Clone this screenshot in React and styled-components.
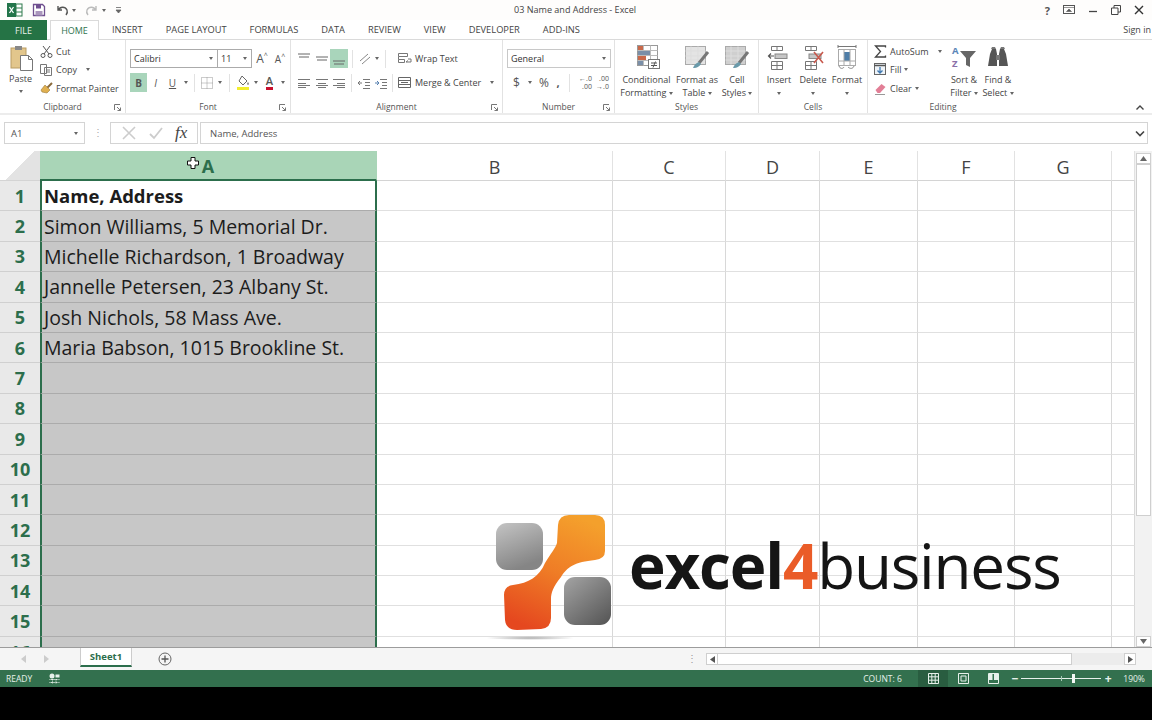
import React from 'react';
import styled, { createGlobalStyle } from 'styled-components';

const GlobalStyle = createGlobalStyle`
    html, body { margin: 0; padding: 0; background: #000; }
    body { font-family: "Open Sans", "Liberation Sans", sans-serif; }
`;

const TABS = ['INSERT', 'PAGE LAYOUT', 'FORMULAS', 'DATA', 'REVIEW', 'VIEW', 'DEVELOPER', 'ADD-INS'];
const COLUMNS = ['B', 'C', 'D', 'E', 'F', 'G'];
const GRID = '40px 337px 236px 113px 94px 98px 97px 97px 23px';
const CELLS = [
    'Name, Address',
    'Simon Williams, 5 Memorial Dr.',
    'Michelle Richardson, 1 Broadway',
    'Jannelle Petersen, 23 Albany St.',
    'Josh Nichols, 58 Mass Ave.',
    'Maria Babson, 1015 Brookline St.',
    '', '', '', '', '', '', '', '', '', '',
];

const Icon = ({ w = 14, h = 14, children }) => (
    <svg width={w} height={h} viewBox={`0 0 ${w} ${h}`} fill="none" style={{ display: 'block' }}>{children}</svg>
);

const AlignV = ({ y }) => (
    <Icon w={14} h={14}>
        <path d={`M1 ${y}h12M2 ${y + 3}h10`} stroke="#666" />
    </Icon>
);
const AlignH = ({ kind }) => {
    const short = { left: 'M1 7.5h8M1 11.5h8', center: 'M3 7.5h8M3 11.5h8', right: 'M5 7.5h8M5 11.5h8' }[kind];
    return (
        <Icon>
            <path d={`M1 3.5h12M1 9.5h12${short}`} stroke="#777" />
        </Icon>
    );
};

const CondFormat = () => (
    <Icon w={26} h={28}>
        <rect x="3.5" y="1.5" width="20" height="20" fill="#fff" stroke="#999" />
        <path d="M3.5 6.5h20M3.5 11.5h20M3.5 16.5h20M9.5 1.5v20M16.5 1.5v20" stroke="#bbb" />
        <rect x="4" y="2" width="5" height="4" fill="#c9694a" />
        <rect x="4" y="7" width="12" height="4" fill="#7a8fa8" />
        <rect x="4" y="12" width="8" height="4" fill="#c9694a" />
        <rect x="4" y="17" width="5" height="4" fill="#7a8fa8" />
        <rect x="14.5" y="15.5" width="11" height="9" fill="#fff" stroke="#777" />
        <path d="M17 19h6M17 21.5h6M21.5 17.5l-2.5 6" stroke="#555" />
    </Icon>
);
const TableBrush = ({ fill }) => (
    <Icon w={26} h={28}>
        <rect x="1.5" y="2.5" width="20" height="18" fill={fill} stroke="#aaa" />
        <path d="M1.5 7h20M1.5 12h20M1.5 16h20M7 2.5v18M14 2.5v18" stroke="#ddd" />
        <path d="M24 8L15 19" stroke="#777" strokeWidth="3" />
        <path d="M15 18c-3 1-5 3-6 6 3 .5 6-1 8-4z" fill="#6a9aaa" />
    </Icon>
);
const InsertCells = ({ del }) => (
    <Icon w={26} h={28}>
        <path d="M5.5 2.500h11v4h-11zM5.500 17.500h11v8h-11zM5.500 21.500h11M11 17.500v8M11 2.500v4" stroke="#777" />
        <rect x="9" y="10" width="12" height="4.500" fill="#c6c6c6" stroke="#888" />
        {del
            ? <path d="M14 8l9 11M23 8l-9 11" stroke="#c8584c" strokeWidth="1.600" />
            : <path d="M8 12H2.500M5 9.500L2.500 12 5 14.500" stroke="#555" strokeWidth="1.200" />}
    </Icon>
);
const FormatCells = () => (
    <Icon w={26} h={28}>
        <path d="M4 2.500h18M4 1v3M22 1v3" stroke="#777" />
        <rect x="4.500" y="5.500" width="17" height="16" fill="#fff" stroke="#aaa" />
        <rect x="10" y="8" width="6" height="9" fill="#4f7ea8" />
        <path d="M10 5.500v16M16 5.500v16M4.500 17h17" stroke="#aaa" />
        <path d="M5 22c1 3 4 3 5 1M14 23c2 2 5 2 6-1" stroke="#888" />
    </Icon>
);
const Binoculars = () => (
    <Icon w={26} h={28}>
        <path d="M3 22l2-12 2-5h4l1 5v12zM14 22V10l1-5h4l2 5 2 12z" fill="#555" />
        <rect x="11" y="11" width="4" height="5" fill="#777" />
        <path d="M6 5l1-2h3l1 2M15 5l1-2h3l1 2" fill="#777" />
    </Icon>
);
const SortFilter = () => (
    <Icon w={26} h={28}>
        <text x="1" y="10" fontFamily="Open Sans" fontSize="9.500" fontWeight="700" fill="#5b86b8">A</text>
        <text x="1" y="23" fontFamily="Open Sans" fontSize="9.500" fontWeight="700" fill="#8a6fa8">Z</text>
        <path d="M9 7h16l-6 7v9l-4-2v-7z" fill="#666" />
    </Icon>
);
const PasteIcon = () => (
    <Icon w={26} h={26}>
        <rect x="3" y="3" width="15" height="20" fill="#e2c68c" stroke="#b99c63" />
        <rect x="7" y="1" width="7" height="4" fill="#888" />
        <path d="M12.500 10.500h8l4 4v11h-12z" fill="#fff" stroke="#777" />
        <path d="M20.500 10.500v4h4" stroke="#777" />
    </Icon>
);

const Caret = () => <CaretShape />;

const MiniLauncher = () => (
    <Launcher>
        <Icon w={7} h={7}>
            <path d="M.5 6V.5H6M3 3l3.500 3.500M6.500 3.500v3h-3" stroke="#777" />
        </Icon>
    </Launcher>
);

const LogoMark = () => (
    <svg width="126" height="128" viewBox="0 0 126 128" style={{ display: 'block' }}>
        <defs>
            <linearGradient id="greyA" x1="0" y1="0" x2="0.4" y2="1">
                <stop offset="0" stopColor="#c4c4c4" />
                <stop offset="1" stopColor="#858585" />
            </linearGradient>
            <linearGradient id="greyB" x1="0" y1="0" x2="0.8" y2="1">
                <stop offset="0" stopColor="#a4a4a4" />
                <stop offset="1" stopColor="#5a5a5a" />
            </linearGradient>
            <linearGradient id="orange" x1="0.7" y1="0" x2="0.3" y2="1">
                <stop offset="0" stopColor="#f4a02c" />
                <stop offset="0.5" stopColor="#ef7c26" />
                <stop offset="1" stopColor="#e5481f" />
            </linearGradient>
            <radialGradient id="shadow">
                <stop offset="0" stopColor="#aaa" />
                <stop offset="1" stopColor="#aaa" stopOpacity="0" />
            </radialGradient>
        </defs>
        <g transform="translate(6 0)">
            <rect x="5" y="8" width="47" height="47" rx="11" fill="url(#greyA)" />
            <rect x="73" y="62" width="47" height="48" rx="11" fill="url(#greyB)" />
            <path d="M78 0H104Q114 0 114 10V36Q114 44 104 45C84 47 76 52 70 62C62 72 60 78 60 84V103Q60 113 50 114L26 115Q15 115 14 105L13 80Q13 71 22 70C38 68 48 62 54 48C60 38 64 34 66 28L67 10Q68 0 78 0Z" fill="url(#orange)" />
            <ellipse cx="39" cy="123" rx="45" ry="2" fill="url(#shadow)" />
        </g>
    </svg>
);

const App = () => {
    return (
        <Window>
            <GlobalStyle />
            <TitleBar>
                <QuickAccess>
                    <Icon w={16} h={16}>
                        <rect x="6" y="2" width="9" height="12" fill="#fff" stroke="#2f7a4d" />
                        <path d="M9 2v12M6 6h9M6 10h9" stroke="#2f7a4d" />
                        <rect x="0" y="1" width="9" height="14" fill="#23744a" />
                        <path d="M2.500 5l4 6M6.500 5l-4 6" stroke="#fff" strokeWidth="1.300" />
                    </Icon>
                    <Icon w={14} h={14}>
                        <path d="M1.500 1.500h9l2 2v9h-11z" stroke="#6f4f8f" fill="#fff" strokeWidth="1.300" />
                        <rect x="4" y="2" width="5" height="3.500" fill="#6f4f8f" />
                        <rect x="3.500" y="8" width="7" height="4.500" fill="#aa96bd" />
                    </Icon>
                    <QuickUndo>
                        <Icon w={14} h={14}>
                            <path d="M3 3v4h4M3.500 7C5 3.500 10 3 12 7c.8 2 .2 3.500-1 5" stroke="#555" strokeWidth="1.400" />
                        </Icon>
                        <Caret />
                    </QuickUndo>
                    <QuickUndo>
                        <Icon w={14} h={14}>
                            <path d="M11 3v4H7M10.500 7C9 3.500 4 3 2 7c-.8 2-.2 3.500 1 5" stroke="#bbb" strokeWidth="1.400" />
                        </Icon>
                        <Caret />
                    </QuickUndo>
                    <Icon w={7} h={8}>
                        <path d="M1 1.500h5M1 4h5l-2.500 3z" stroke="#666" fill="#666" strokeWidth=".8" />
                    </Icon>
                </QuickAccess>
                <WindowTitle>03 Name and Address - Excel</WindowTitle>
                <WindowControls>
                    <HelpMark>?</HelpMark>
                    <Icon w={12} h={10}>
                        <rect x=".5" y=".5" width="11" height="8" stroke="#555" />
                        <path d="M.5 2.500h11M6 4l-2.500 2.500h5z" stroke="#555" fill="#555" strokeWidth=".6" />
                    </Icon>
                    <Icon w={10} h={10}><path d="M1 6.500h8" stroke="#444" strokeWidth="1.300" /></Icon>
                    <Icon w={10} h={10}>
                        <path d="M.5 3h6.500v6.500H.5zM3 3V.5h6.500V7H7" stroke="#444" />
                    </Icon>
                    <Icon w={10} h={10}><path d="M1 1l8 8M9 1l-8 8" stroke="#333" strokeWidth="1.400" /></Icon>
                </WindowControls>
            </TitleBar>

            <TabStrip>
                <FileTab>FILE</FileTab>
                <HomeTab>HOME</HomeTab>
                {TABS.map((tab) => <RibbonTab key={tab}>{tab}</RibbonTab>)}
                <SignIn>Sign in</SignIn>
            </TabStrip>

            <Ribbon>
                <Group $w={126}>
                    <ClipboardBody>
                        <PasteButton>
                            <PasteIcon />
                            <span>Paste</span>
                            <Caret />
                        </PasteButton>
                        <Stack>
                            <StackItem>
                                <Icon w={13} h={13}>
                                    <path d="M3 1l6 8M10 1L4 9" stroke="#555" />
                                    <circle cx="3" cy="10.500" r="2" stroke="#555" />
                                    <circle cx="10" cy="10.500" r="2" stroke="#555" />
                                </Icon>
                                Cut
                            </StackItem>
                            <StackItem>
                                <Icon w={13} h={13}>
                                    <path d="M.5 1.500h6v9h-6zM4.500 4.500h7v8h-7zM6 7h4M6 9h4" stroke="#777" fill="#fff" />
                                </Icon>
                                Copy
                                <CaretGap><Caret /></CaretGap>
                            </StackItem>
                            <StackItem>
                                <Icon w={13} h={13}>
                                    <path d="M7 6l5-5" stroke="#8a6a3a" strokeWidth="2" />
                                    <path d="M5 3l5 5-3 3-5-1-1-2z" fill="#e0b050" stroke="#9a7a3a" strokeWidth=".6" />
                                </Icon>
                                Format Painter
                            </StackItem>
                        </Stack>
                    </ClipboardBody>
                    <GroupLabel>Clipboard<MiniLauncher /></GroupLabel>
                </Group>

                <Group $w={165}>
                    <SmallRows>
                        <ToolRow>
                            <Select $w={88}>Calibri<Caret /></Select>
                            <Select $w={34} $joined>11<Caret /></Select>
                            <ToolButton $w={18} $ml={1}><BigA $size={12}>A<sup>^</sup></BigA></ToolButton>
                            <ToolButton $w={18}><BigA $size={10}>A<sup>^</sup></BigA></ToolButton>
                        </ToolRow>
                        <ToolRow>
                            <ToolButton $w={17} $on><Glyph $b>B</Glyph></ToolButton>
                            <ToolButton $w={17}><Glyph $i>I</Glyph></ToolButton>
                            <ToolButton $w={17}><Glyph $u>U</Glyph></ToolButton>
                            <ToolButton $w={10}><Caret /></ToolButton>
                            <Divider $gap={3} />
                            <ToolButton $w={17}>
                                <Icon w={12} h={12}>
                                    <path d="M.5.500h11v11H.5zM6 .5v11M.5 6h11" stroke="#999" strokeDasharray="1 1" />
                                </Icon>
                            </ToolButton>
                            <ToolButton $w={10}><Caret /></ToolButton>
                            <Divider />
                            <ToolButton $w={17}>
                                <Icon w={14} h={16}>
                                    <path d="M6 1l5 5-4 4-4-4z" stroke="#666" fill="#fff" />
                                    <path d="M12 7c1 1.500 1 2.500 0 3-1-.5-1-1.500 0-3z" fill="#666" />
                                    <rect x="1" y="12" width="12" height="3" fill="#f2ee2e" />
                                </Icon>
                            </ToolButton>
                            <ToolButton $w={10}><Caret /></ToolButton>
                            <ToolButton $w={17}>
                                <ColorA>A</ColorA>
                            </ToolButton>
                            <ToolButton $w={10}><Caret /></ToolButton>
                        </ToolRow>
                    </SmallRows>
                    <GroupLabel>Font<MiniLauncher /></GroupLabel>
                </Group>

                <Group $w={212}>
                    <SmallRows>
                        <ToolRow>
                            <ToolButton $w={18}><AlignV y={2} /></ToolButton>
                            <ToolButton $w={17}><AlignV y={5} /></ToolButton>
                            <ToolButton $w={18} $on><AlignV y={9} /></ToolButton>
                            <Divider />
                            <ToolButton $w={15}>
                                <Icon w={14} h={14}>
                                    <path d="M2 9l8-7M4 12l8-7" stroke="#888" />
                                </Icon>
                            </ToolButton>
                            <ToolButton $w={9}><Caret /></ToolButton>
                            <Divider />
                            <WideAction $ml={7}>
                                <Icon w={14} h={14}>
                                    <path d="M.5 1.500h9v3h-9zM.5 4.500v3h6M.5 7.500v3h6v-3M10 7h3v3H8l2-1.500" stroke="#777" />
                                </Icon>
                                Wrap Text
                            </WideAction>
                        </ToolRow>
                        <ToolRow>
                            <ToolButton $w={18}><AlignH kind="left" /></ToolButton>
                            <ToolButton $w={17}><AlignH kind="center" /></ToolButton>
                            <ToolButton $w={18}><AlignH kind="right" /></ToolButton>
                            <Divider $gap={3} />
                            <ToolButton $w={17}>
                                <Icon>
                                    <path d="M6 3.500h7M8 6.500h5M8 9.500h5M6 12.500h7M5 7H1M3 5L1 7l2 2" stroke="#777" />
                                </Icon>
                            </ToolButton>
                            <ToolButton $w={17}>
                                <Icon>
                                    <path d="M6 3.500h7M8 6.500h5M8 9.500h5M6 12.500h7" stroke="#777" />
                                    <path d="M1 7h4M3 5l2 2-2 2" stroke="#5680b0" />
                                </Icon>
                            </ToolButton>
                            <Divider $gap={3} />
                            <WideAction $ml={1}>
                                <Icon w={14} h={14}>
                                    <path d="M.5 1.500h12v10H.5zM.5 4.500h12M.5 8.500h12" stroke="#666" />
                                    <path d="M3 6.500h7" stroke="#666" />
                                </Icon>
                                Merge &amp; Center
                                <CaretGap><Caret /></CaretGap>
                            </WideAction>
                        </ToolRow>
                    </SmallRows>
                    <GroupLabel>Alignment<MiniLauncher /></GroupLabel>
                </Group>

                <Group $w={112}>
                    <SmallRows>
                        <ToolRow>
                            <Select $w={104} $soft>General<Caret /></Select>
                        </ToolRow>
                        <ToolRow>
                            <ToolButton $w={19}><Glyph $size={12}>$</Glyph></ToolButton>
                            <ToolButton $w={8}><Caret /></ToolButton>
                            <ToolButton $w={20}><Glyph $size={12}>%</Glyph></ToolButton>
                            <ToolButton $w={8}><Glyph $b $size={11}>,</Glyph></ToolButton>
                            <Divider $gap={7} />
                            <ToolButton $w={17}><Decimal>←.0<br />.00</Decimal></ToolButton>
                            <ToolButton $w={17}><Decimal>.00<br />→.0</Decimal></ToolButton>
                        </ToolRow>
                    </SmallRows>
                    <GroupLabel>Number<MiniLauncher /></GroupLabel>
                </Group>

                <Group $w={144}>
                    <BigRow>
                        <BigButton $w={57}>
                            <BigIcon><CondFormat /></BigIcon>
                            <span>Conditional</span>
                            <span>Formatting <Caret /></span>
                        </BigButton>
                        <BigButton $w={44}>
                            <BigIcon><TableBrush fill="#e4e4e4" /></BigIcon>
                            <span>Format as</span>
                            <span>Table <Caret /></span>
                        </BigButton>
                        <BigButton $w={36}>
                            <BigIcon><TableBrush fill="#cfcfcf" /></BigIcon>
                            <span>Cell</span>
                            <span>Styles <Caret /></span>
                        </BigButton>
                    </BigRow>
                    <GroupLabel>Styles</GroupLabel>
                </Group>

                <Group $w={109}>
                    <BigRow>
                        <BigButton $w={34}>
                            <BigIcon><InsertCells /></BigIcon>
                            <span>Insert</span>
                            <span><Caret /></span>
                        </BigButton>
                        <BigButton $w={34}>
                            <BigIcon><InsertCells del /></BigIcon>
                            <span>Delete</span>
                            <span><Caret /></span>
                        </BigButton>
                        <BigButton $w={34}>
                            <BigIcon><FormatCells /></BigIcon>
                            <span>Format</span>
                            <span><Caret /></span>
                        </BigButton>
                    </BigRow>
                    <GroupLabel>Cells</GroupLabel>
                </Group>

                <Group $w={150} $last>
                    <EditingBody>
                        <EditingStack>
                            <StackItem>
                                <Icon w={13} h={13}>
                                    <path d="M11.500 2.500V1H1.500L6.500 6.500l-5 5.500h10v-1.500" stroke="#444" strokeWidth="1.300" />
                                </Icon>
                                AutoSum
                                <CaretGap><Caret /></CaretGap>
                            </StackItem>
                            <StackItem>
                                <Icon w={13} h={13}>
                                    <rect x=".5" y=".5" width="11" height="11" stroke="#666" fill="#eef3f8" />
                                    <path d="M.5 2.500h11" stroke="#555" strokeWidth="1.500" />
                                    <path d="M6 4v6M3.500 7.500L6 10l2.500-2.500" stroke="#3f78b0" strokeWidth="1.300" />
                                </Icon>
                                Fill <Caret />
                            </StackItem>
                            <StackItem>
                                <Icon w={13} h={13}>
                                    <path d="M1.500 8l6-6 4 3-5.500 6H3.500z" fill="#e27e96" />
                                    <path d="M1 12.500h10" stroke="#999" />
                                </Icon>
                                Clear <Caret />
                            </StackItem>
                        </EditingStack>
                        <BigButton $w={34}>
                            <BigIcon><SortFilter /></BigIcon>
                            <span>Sort &amp;</span>
                            <span>Filter <Caret /></span>
                        </BigButton>
                        <BigButton $w={34}>
                            <BigIcon><Binoculars /></BigIcon>
                            <span>Find &amp;</span>
                            <span>Select <Caret /></span>
                        </BigButton>
                    </EditingBody>
                    <GroupLabel>Editing</GroupLabel>
                </Group>
                <Collapse>
                    <Icon w={10} h={7}><path d="M1.500 5.500L5 2l3.500 3.500" stroke="#444" strokeWidth="1.400" /></Icon>
                </Collapse>
            </Ribbon>

            <FormulaBar>
                <NameBox>A1<Caret /></NameBox>
                <Grip>⋮</Grip>
                <FxBox>
                    <Icon w={16} h={14}><path d="M2 1l12 12M14 1L2 13" stroke="#ccc" strokeWidth="1.600" /></Icon>
                    <Icon w={16} h={14}><path d="M2 8l4 4 8-10" stroke="#ccc" strokeWidth="1.800" /></Icon>
                    <FxMark>fx</FxMark>
                </FxBox>
                <FormulaInput>
                    Name, Address
                    <Icon w={10} h={7}><path d="M1 1.500L5 5.500l4-4" stroke="#444" strokeWidth="1.600" /></Icon>
                </FormulaInput>
            </FormulaBar>

            <SheetArea>
                <Sheet>
                    <HeaderRow>
                        <Corner />
                        <HeaderCell $selected>
                            A
                            <MoveCursor>
                                <Icon w={12} h={12}>
                                    <path d="M4 .5h4v3.500h3.500v4H8v3.500H4V8H.5V4H4z" fill="#fff" stroke="#111" />
                                </Icon>
                            </MoveCursor>
                        </HeaderCell>
                        {COLUMNS.map((col) => <HeaderCell key={col}>{col}</HeaderCell>)}
                        <HeaderCell />
                    </HeaderRow>
                    {CELLS.map((text, i) => (
                        <SheetRow key={i}>
                            <RowNumber>{i + 1}</RowNumber>
                            <SelectedCell $active={i === 0}>{text}</SelectedCell>
                            <Cell /><Cell /><Cell /><Cell /><Cell /><Cell /><Cell />
                        </SheetRow>
                    ))}
                    <Logo>
                        <LogoMark />
                        <LogoText>excel<em>4</em><span>business</span></LogoText>
                    </Logo>
                </Sheet>
                <VScroll>
                    <ScrollButton>
                        <Icon w={7} h={5}><path d="M3.500 0L7 5H0z" fill="#666" /></Icon>
                    </ScrollButton>
                    <VThumb />
                    <VTrack />
                    <ScrollButton>
                        <Icon w={7} h={5}><path d="M3.500 5L7 0H0z" fill="#666" /></Icon>
                    </ScrollButton>
                </VScroll>
            </SheetArea>

            <SheetTabs>
                <TabNav>
                    <Icon w={5} h={8}><path d="M5 0L0 4l5 4z" fill="#ccc" /></Icon>
                    <Icon w={5} h={8}><path d="M0 0l5 4-5 4z" fill="#ccc" /></Icon>
                </TabNav>
                <SheetTab>Sheet1</SheetTab>
                <AddSheet>
                    <Icon w={14} h={14}>
                        <circle cx="7" cy="7" r="6" stroke="#666" />
                        <path d="M7 3.500v7M3.500 7h7" stroke="#555" strokeWidth="1.300" />
                    </Icon>
                </AddSheet>
                <TabGrip>⋮</TabGrip>
                <HScroll>
                    <HButton>
                        <Icon w={5} h={7}><path d="M5 0L0 3.500 5 7z" fill="#555" /></Icon>
                    </HButton>
                    <HThumb />
                    <HTrack />
                    <HButton>
                        <Icon w={5} h={7}><path d="M0 0l5 3.500L0 7z" fill="#555" /></Icon>
                    </HButton>
                </HScroll>
            </SheetTabs>

            <StatusBar>
                <StatusText>READY</StatusText>
                <MacroIcon>
                    <Icon w={11} h={11}>
                        <circle cx="3" cy="3" r="2.500" fill="#e6f0ea" />
                        <path d="M6.500 1.500h4v3h-4z" fill="#e6f0ea" />
                        <path d="M.5 6.500h10M.5 9.500h10M3.500 6v5M7 6v5" stroke="#e6f0ea" strokeDasharray="1 .6" />
                    </Icon>
                </MacroIcon>
                <Count>COUNT: 6</Count>
                <ViewButton $on>
                    <Icon w={11} h={11}><path d="M.5.500h10v10H.5zM3.800.5v10M7.200.5v10M.5 3.800h10M.5 7.200h10" stroke="#e6f0ea" /></Icon>
                </ViewButton>
                <ViewButton>
                    <Icon w={11} h={11}><path d="M.5.500h10v10H.5zM3 3h5v5H3z" stroke="#e6f0ea" /></Icon>
                </ViewButton>
                <ViewButton>
                    <Icon w={11} h={11}><path d="M.5.500h10v10H.5z" stroke="#e6f0ea" /><path d="M1 1h3.500v6H1zM6 1h4v6H6z" fill="#e6f0ea" /></Icon>
                </ViewButton>
                <ZoomMark $ml={3}>−</ZoomMark>
                <ZoomSlider>
                    <ZoomTick />
                    <ZoomThumb />
                </ZoomSlider>
                <ZoomMark $ml={3}>+</ZoomMark>
                <ZoomValue>190%</ZoomValue>
            </StatusBar>
        </Window>
    );
};

export default App;

const Window = styled.div`
    width: 1152px;
    height: 720px;
    overflow: hidden;
    background: #000;
    display: flex;
    flex-direction: column;
`;

const TitleBar = styled.div`
    position: relative;
    height: 20px;
    background: #fefdfc;
    display: flex;
    align-items: center;
    justify-content: space-between;
`;

const QuickAccess = styled.div`
    display: flex;
    align-items: center;
    gap: 9px;
    padding-left: 7px;
`;

const QuickUndo = styled.div`
    display: flex;
    align-items: center;
    gap: 3px;
`;

const WindowTitle = styled.div`
    position: absolute;
    left: 514px;
    top: 3px;
    font-size: 9.05px;
    line-height: 14px;
    color: #444;
`;

const WindowControls = styled.div`
    display: flex;
    align-items: center;
    gap: 13px;
    padding-right: 8px;
`;

const HelpMark = styled.span`
    font-size: 11px;
    font-weight: 700;
    color: #555;
`;

const TabStrip = styled.div`
    height: 20px;
    background: #fff;
    display: flex;
    align-items: stretch;
    box-sizing: border-box;
    border-bottom: 1px solid #dadada;
`;

const FileTab = styled.div`
    width: 47px;
    height: 20px;
    background: #257345;
    color: #e8f2ec;
    font-size: 9px;
    display: flex;
    align-items: center;
    justify-content: center;
`;

const HomeTab = styled.div`
    width: 49px;
    height: 20px;
    margin-left: 3px;
    margin-right: 13px;
    box-sizing: border-box;
    background: #fff;
    border: 1px solid #dadada;
    border-bottom: none;
    color: #2f7350;
    font-size: 9px;
    display: flex;
    align-items: center;
    justify-content: center;
`;

const RibbonTab = styled.div`
    margin-right: 23px;
    color: #444;
    font-size: 9.3px;
    display: flex;
    align-items: center;
    white-space: nowrap;
`;

const SignIn = styled.div`
    margin-left: auto;
    color: #444;
    font-size: 9px;
    display: flex;
    align-items: center;
    padding-right: 1px;
    white-space: nowrap;
`;

const Ribbon = styled.div`
    position: relative;
    height: 75px;
    box-sizing: border-box;
    background: #fff;
    border-bottom: 2px solid #ececec;
    display: flex;
    font-size: 9px;
    color: #444;
`;

const Group = styled.div`
    position: relative;
    width: ${(p) => p.$w}px;
    height: 73px;
    box-sizing: border-box;
    display: flex;
    flex-direction: column;
    flex-shrink: 0;
    border-right: ${(p) => (p.$last ? 'none' : '1px solid #e2e2e2')};
`;

const GroupLabel = styled.div`
    position: relative;
    height: 13px;
    margin-top: auto;
    text-align: center;
    line-height: 13px;
    font-size: 8.5px;
    color: #555;
`;

const Launcher = styled.span`
    position: absolute;
    right: 4px;
    top: 4px;
`;

const ClipboardBody = styled.div`
    display: flex;
    padding: 2px 0 0 7px;
`;

const PasteButton = styled.div`
    width: 27px;
    display: flex;
    flex-direction: column;
    align-items: center;
    padding-top: 3px;
    line-height: 13px;

    span { margin-top: 1px; margin-bottom: 4px; }
`;

const Stack = styled.div`
    display: flex;
    flex-direction: column;
    padding-left: 6px;
`;

const EditingStack = styled(Stack)`
    width: 79px;
    flex-shrink: 0;
    box-sizing: border-box;
`;

const StackItem = styled.div`
    height: 18.5px;
    display: flex;
    align-items: center;
    gap: 3px;
    white-space: nowrap;
`;

const CaretGap = styled.span`
    margin-left: 6px;
    display: inline-flex;
`;

const CaretShape = styled.span`
    display: inline-block;
    width: 0;
    height: 0;
    flex-shrink: 0;
    vertical-align: middle;
    border-left: 2.5px solid transparent;
    border-right: 2.5px solid transparent;
    border-top: 3px solid #666;
`;

const SmallRows = styled.div`
    display: flex;
    flex-direction: column;
    gap: 5px;
    padding: 9px 0 0 4px;
`;

const ToolRow = styled.div`
    display: flex;
    align-items: center;
    height: 19px;
`;

const Select = styled.div`
    width: ${(p) => p.$w}px;
    height: 19px;
    box-sizing: border-box;
    padding: 0 4px 0 3px;
    display: flex;
    align-items: center;
    justify-content: space-between;
    background: #fff;
    border: 1px solid ${(p) => (p.$soft ? '#c8c8c8' : '#ababab')};
    border-left-width: ${(p) => (p.$joined ? 0 : 1)}px;
    font-size: 9px;
    color: #333;
`;

const ToolButton = styled.div`
    width: ${(p) => p.$w}px;
    height: 19px;
    margin-left: ${(p) => p.$ml || 0}px;
    flex-shrink: 0;
    display: flex;
    align-items: center;
    justify-content: center;
    background: ${(p) => (p.$on ? '#a9d5bb' : 'transparent')};
`;

const Divider = styled.div`
    width: 1px;
    height: 18px;
    margin: 0 ${(p) => p.$gap ?? 4}px;
    flex-shrink: 0;
    background: #e2e2e2;
`;

const Glyph = styled.span`
    font-size: ${(p) => p.$size || 10}px;
    font-weight: ${(p) => (p.$b ? 700 : 400)};
    font-style: ${(p) => (p.$i ? 'italic' : 'normal')};
    text-decoration: ${(p) => (p.$u ? 'underline' : 'none')};
    color: #555;
`;

const BigA = styled.span`
    font-size: ${(p) => p.$size}px;
    color: #555;

    sup { font-size: 7px; line-height: 0; }
`;

const ColorA = styled.span`
    font-size: 11px;
    font-weight: 600;
    line-height: 12px;
    color: #555;
    border-bottom: 3px solid #c8102e;
`;

const WideAction = styled.div`
    display: flex;
    align-items: center;
    gap: 3px;
    margin-left: ${(p) => p.$ml}px;
    padding-left: 1px;
    white-space: nowrap;
`;

const Decimal = styled.span`
    font-size: 7px;
    line-height: 8px;
    color: #555;
    text-align: right;
    white-space: nowrap;
`;

const BigRow = styled.div`
    display: flex;
    justify-content: center;
    padding-top: 4px;
`;

const BigButton = styled.div`
    width: ${(p) => p.$w}px;
    display: flex;
    flex-direction: column;
    align-items: center;
    line-height: 13px;
    white-space: nowrap;
`;

const BigIcon = styled.div`
    height: 29px;
`;

const EditingBody = styled.div`
    display: flex;
    padding-top: 2px;

    ${BigButton} { padding-top: 2px; }
`;

const Collapse = styled.div`
    position: absolute;
    right: 7px;
    bottom: 2px;
`;

const FormulaBar = styled.div`
    height: 36px;
    box-sizing: border-box;
    background: #fff;
    padding: 7px 4px;
    display: flex;
    align-items: stretch;
    font-size: 9.5px;
    color: #555;
`;

const NameBox = styled.div`
    width: 81px;
    box-sizing: border-box;
    border: 1px solid #d4d4d4;
    padding: 0 6px;
    display: flex;
    align-items: center;
    justify-content: space-between;
`;

const Grip = styled.div`
    width: 25px;
    text-align: center;
    line-height: 21px;
    color: #aaa;
`;

const FxBox = styled.div`
    width: 88px;
    box-sizing: border-box;
    border: 1px solid #d4d4d4;
    display: flex;
    align-items: center;
    justify-content: space-around;
    padding: 0 4px;
`;

const FxMark = styled.span`
    font-family: "Liberation Serif", serif;
    font-style: italic;
    font-size: 17px;
    color: #444;
`;

const FormulaInput = styled.div`
    flex: 1;
    margin-left: 2px;
    box-sizing: border-box;
    border: 1px solid #d4d4d4;
    padding: 0 2px 0 9px;
    display: flex;
    align-items: center;
    justify-content: space-between;
`;

const SheetArea = styled.div`
    height: 497px;
    background: #fff;
    display: flex;
    box-sizing: border-box;
    border-bottom: 1px solid #9c9c9c;
`;

const Sheet = styled.div`
    position: relative;
    width: 1135px;
    overflow: hidden;
`;

const HeaderRow = styled.div`
    display: grid;
    grid-template-columns: ${GRID};
    height: 30px;
`;

const Corner = styled.div`
    background: linear-gradient(135deg, #fff 50%, #e3e3e3 50%);
    border-bottom: 1px solid #d4d4d4;
`;

const HeaderCell = styled.div`
    position: relative;
    box-sizing: border-box;
    display: flex;
    align-items: center;
    justify-content: center;
    padding-top: 2px;
    font-size: 18px;
    font-weight: ${(p) => (p.$selected ? 700 : 400)};
    color: ${(p) => (p.$selected ? '#2c6e4c' : '#444')};
    background: ${(p) => (p.$selected ? '#a9d5b7' : '#fff')};
    border-bottom: ${(p) => (p.$selected ? '2px solid #2c6e4c' : '1px solid #d4d4d4')};
    border-right: 1px solid ${(p) => (p.$selected ? '#a9d5b7' : '#e2e2e2')};
`;

const MoveCursor = styled.span`
    position: absolute;
    left: 147px;
    top: 6px;
`;

const SheetRow = styled.div`
    display: grid;
    grid-template-columns: ${GRID};
    height: 30.4px;
`;

const RowNumber = styled.div`
    box-sizing: border-box;
    background: #e9e9e9;
    border-bottom: 1px solid #d0d0d0;
    display: flex;
    align-items: center;
    justify-content: center;
    font-size: 18px;
    font-weight: 700;
    color: #2c6e4c;
`;

const Cell = styled.div`
    box-sizing: border-box;
    border-bottom: 1px solid #e0e0e0;
    border-right: 1px solid #d8d8d8;
`;

const SelectedCell = styled.div`
    box-sizing: border-box;
    padding-left: 2px;
    display: flex;
    align-items: center;
    white-space: nowrap;
    font-size: ${(p) => (p.$active ? 18.5 : 19.5)}px;
    font-weight: ${(p) => (p.$active ? 700 : 400)};
    color: #1c1c1c;
    background: ${(p) => (p.$active ? '#fff' : '#c7c7c7')};
    border-left: 2px solid #2c6e4c;
    border-right: 2px solid #2c6e4c;
    border-bottom: 1px solid #ababab;
`;

const Logo = styled.div`
    position: absolute;
    left: 485px;
    top: 364px;
    display: flex;
    align-items: flex-start;
    gap: 18px;
`;

const LogoText = styled.div`
    margin-top: 15px;
    font-size: 62px;
    line-height: 70px;
    letter-spacing: -1.2px;
    font-weight: 700;
    color: #151515;
    white-space: nowrap;

    em { font-style: normal; color: #ea5c28; }
    span { font-weight: 400; }
`;

const VScroll = styled.div`
    width: 17px;
    box-sizing: border-box;
    padding: 2px 1px 0 1px;
    background: #f2f2f2;
    display: flex;
    flex-direction: column;
`;

const ScrollButton = styled.div`
    height: 11px;
    flex-shrink: 0;
    box-sizing: border-box;
    background: #fff;
    border: 1px solid #d0d0d0;
    display: flex;
    align-items: center;
    justify-content: center;
`;

const VThumb = styled.div`
    height: 352px;
    flex-shrink: 0;
    box-sizing: border-box;
    background: #fff;
    border: 1px solid #cfcfcf;
`;

const VTrack = styled.div`
    flex: 1;
`;

const SheetTabs = styled.div`
    height: 22px;
    background: #f5f5f5;
    display: flex;
    align-items: flex-start;
`;

const TabNav = styled.div`
    width: 80px;
    box-sizing: border-box;
    padding: 7px 0 0 21px;
    display: flex;
    gap: 18px;
`;

const SheetTab = styled.div`
    width: 52px;
    height: 19px;
    box-sizing: border-box;
    background: #fff;
    border-left: 1px solid #ccc;
    border-right: 1px solid #ccc;
    border-bottom: 2px solid #2c6e4c;
    display: flex;
    align-items: center;
    justify-content: center;
    font-size: 9.5px;
    font-weight: 700;
    color: #2c6e4c;
`;

const AddSheet = styled.div`
    margin-left: 26px;
    padding-top: 4px;
`;

const TabGrip = styled.div`
    margin-left: 515px;
    padding-top: 3px;
    font-size: 10px;
    color: #999;
`;

const HScroll = styled.div`
    width: 430px;
    height: 12px;
    margin-left: 9px;
    margin-top: 5px;
    display: flex;
`;

const HButton = styled.div`
    width: 12px;
    flex-shrink: 0;
    box-sizing: border-box;
    background: #fff;
    border: 1px solid #cfcfcf;
    display: flex;
    align-items: center;
    justify-content: center;
`;

const HThumb = styled.div`
    width: 354px;
    box-sizing: border-box;
    background: #fff;
    border: 1px solid #cfcfcf;
    border-left: none;
`;

const HTrack = styled.div`
    flex: 1;
    background: #ececec;
`;

const StatusBar = styled.div`
    height: 17px;
    background: #33704e;
    display: flex;
    align-items: center;
    color: #e6f0ea;
    font-size: 8.5px;
`;

const StatusText = styled.span`
    margin-left: 6px;
`;

const MacroIcon = styled.span`
    margin-left: 17px;
`;

const Count = styled.span`
    margin-left: 803px;
    width: 55px;
`;

const ViewButton = styled.div`
    width: 30px;
    height: 17px;
    display: flex;
    align-items: center;
    justify-content: center;
    background: ${(p) => (p.$on ? '#295d40' : 'transparent')};
`;

const ZoomMark = styled.span`
    width: 8px;
    margin-left: ${(p) => p.$ml}px;
    text-align: center;
    font-size: 12px;
    font-weight: 700;
    line-height: 17px;
`;

const ZoomSlider = styled.div`
    position: relative;
    width: 80px;
    height: 1px;
    margin-left: 2px;
    background: #e6f0ea;
`;

const ZoomTick = styled.span`
    position: absolute;
    left: 40px;
    top: -2px;
    width: 1px;
    height: 5px;
    background: #a8c8b6;
`;

const ZoomThumb = styled.span`
    position: absolute;
    left: 51px;
    top: -4px;
    width: 3px;
    height: 9px;
    background: #f4f8f5;
`;

const ZoomValue = styled.span`
    margin-left: 11px;
`;
